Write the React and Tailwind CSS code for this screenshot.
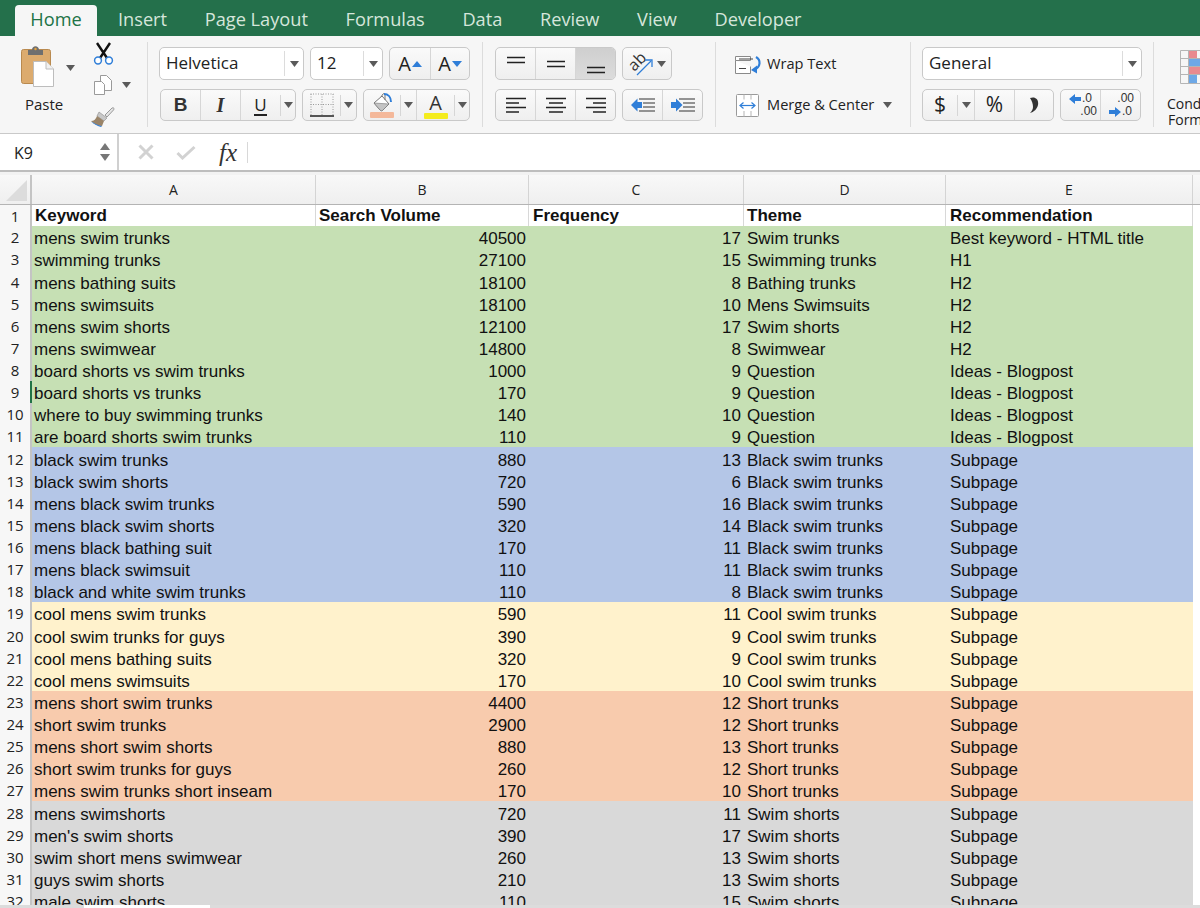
const tabs = ["Insert", "Page Layout", "Formulas", "Data", "Review", "View", "Developer"];

const green = "bg-[#c6e0b4]";
const blue = "bg-[#b4c6e7]";
const yellow = "bg-[#fff2cc]";
const orange = "bg-[#f8cbad]";
const gray = "bg-[#d9d9d9]";

const rows = [
  ["mens swim trunks", 40500, 17, "Swim trunks", "Best keyword - HTML title", green],
  ["swimming trunks", 27100, 15, "Swimming trunks", "H1", green],
  ["mens bathing suits", 18100, 8, "Bathing trunks", "H2", green],
  ["mens swimsuits", 18100, 10, "Mens Swimsuits", "H2", green],
  ["mens swim shorts", 12100, 17, "Swim shorts", "H2", green],
  ["mens swimwear", 14800, 8, "Swimwear", "H2", green],
  ["board shorts vs swim trunks", 1000, 9, "Question", "Ideas - Blogpost", green],
  ["board shorts vs trunks", 170, 9, "Question", "Ideas - Blogpost", green],
  ["where to buy swimming trunks", 140, 10, "Question", "Ideas - Blogpost", green],
  ["are board shorts swim trunks", 110, 9, "Question", "Ideas - Blogpost", green],
  ["black swim trunks", 880, 13, "Black swim trunks", "Subpage", blue],
  ["black swim shorts", 720, 6, "Black swim trunks", "Subpage", blue],
  ["mens black swim trunks", 590, 16, "Black swim trunks", "Subpage", blue],
  ["mens black swim shorts", 320, 14, "Black swim trunks", "Subpage", blue],
  ["mens black bathing suit", 170, 11, "Black swim trunks", "Subpage", blue],
  ["mens black swimsuit", 110, 11, "Black swim trunks", "Subpage", blue],
  ["black and white swim trunks", 110, 8, "Black swim trunks", "Subpage", blue],
  ["cool mens swim trunks", 590, 11, "Cool swim trunks", "Subpage", yellow],
  ["cool swim trunks for guys", 390, 9, "Cool swim trunks", "Subpage", yellow],
  ["cool mens bathing suits", 320, 9, "Cool swim trunks", "Subpage", yellow],
  ["cool mens swimsuits", 170, 10, "Cool swim trunks", "Subpage", yellow],
  ["mens short swim trunks", 4400, 12, "Short trunks", "Subpage", orange],
  ["short swim trunks", 2900, 12, "Short trunks", "Subpage", orange],
  ["mens short swim shorts", 880, 13, "Short trunks", "Subpage", orange],
  ["short swim trunks for guys", 260, 12, "Short trunks", "Subpage", orange],
  ["mens swim trunks short inseam", 170, 10, "Short trunks", "Subpage", orange],
  ["mens swimshorts", 720, 11, "Swim shorts", "Subpage", gray],
  ["men's swim shorts", 390, 17, "Swim shorts", "Subpage", gray],
  ["swim short mens swimwear", 260, 13, "Swim shorts", "Subpage", gray],
  ["guys swim shorts", 210, 13, "Swim shorts", "Subpage", gray],
  ["male swim shorts", 110, 15, "Swim shorts", "Subpage", gray],
];

function Caret({ className = "" }) {
  return (
    <svg width="9" height="6" viewBox="0 0 9 6" className={className}>
      <path d="M0 0h9L4.5 6z" fill="#5a5a5a" />
    </svg>
  );
}

function Group({ className = "", children }) {
  return (
    <div className={`flex overflow-hidden rounded-[5px] border border-[#c9c9c9] bg-linear-to-b from-[#fafafa] to-[#efefef] ${className}`}>
      {children}
    </div>
  );
}

function Cell({ className = "", children }) {
  return (
    <div className={`flex h-full items-center justify-center border-r border-[#d6d6d6] last:border-r-0 ${className}`}>
      {children}
    </div>
  );
}

// dropdown part of a button, its divider is shorter than the button
function Drop({ className = "flex-1" }) {
  return (
    <div className={`flex h-full items-center border-r border-[#d6d6d6] last:border-r-0 ${className}`}>
      <div className="flex h-[21px] w-full items-center justify-center border-l border-[#d6d6d6]">
        <Caret />
      </div>
    </div>
  );
}

function Select({ className = "", label }) {
  return (
    <div className={`flex h-[33px] items-center rounded-[5px] border border-[#c9c9c9] bg-white ${className}`}>
      <span className="-mt-[2px] flex-1 pl-[6px] text-[17px] leading-none text-[#222]">{label}</span>
      <div className="flex h-[25px] w-[19px] items-center justify-center border-l border-[#dcdcdc]">
        <Caret />
      </div>
    </div>
  );
}

// horizontal strokes used by the alignment buttons
function Lines({ lines, width = 24, height = 20 }) {
  return (
    <svg width={width} height={height} viewBox={`0 0 ${width} ${height}`}>
      {lines.map(([x1, y, x2], i) => (
        <path key={i} d={`M${x1} ${y + 0.5}H${x2}`} stroke="#222" strokeWidth="1.4" />
      ))}
    </svg>
  );
}

function PasteIcon() {
  return (
    <svg width="36" height="44" viewBox="0 0 36 44">
      <rect x="1.5" y="5.5" width="29" height="34" rx="2" fill="#dcab6e" stroke="#b98a4f" />
      <path d="M8 11V6h4c0-5 7-5 7 0h4v5z" fill="#6f6f6f" />
      <circle cx="15.5" cy="5" r="1.2" fill="#e8a33c" />
      <path d="M13.5 17.5H26l7.5 7.5v17.5h-20z" fill="#fff" stroke="#bdbdbd" />
      <path d="M26 17.5V25h7.5" fill="#f1f1f1" stroke="#bdbdbd" />
    </svg>
  );
}

function ScissorsIcon() {
  return (
    <svg width="21" height="23" viewBox="0 0 21 23">
      <path d="M4 1l10 15M17 1L7 16" stroke="#111" strokeWidth="2.4" />
      <circle cx="5" cy="18.5" r="3.4" fill="#fff" stroke="#2f7ed8" strokeWidth="1.5" />
      <circle cx="16" cy="18.5" r="3.4" fill="#fff" stroke="#2f7ed8" strokeWidth="1.5" />
    </svg>
  );
}

function CopyIcon() {
  return (
    <svg width="20" height="22" viewBox="0 0 20 22">
      <path d="M7.5 1.5h6l5 5v10h-11z" fill="#fff" stroke="#9a9a9a" />
      <path d="M1.5 7.5h7l3 3v10h-10z" fill="#fff" stroke="#9a9a9a" />
    </svg>
  );
}

function BrushIcon() {
  return (
    <svg width="24" height="21" viewBox="0 0 24 21">
      <path d="M14 9l7-7c2-1 2.500 1 1.500 2l-6.500 7z" fill="#e4e4e4" stroke="#9a9a9a" />
      <path d="M8 6l8 6-3 3-7-5z" fill="#c8c8c8" stroke="#8a8a8a" strokeWidth=".6" />
      <path d="M6 10l7 5-2 5C7 20 3 18 0 15c3 0 5-2 6-5z" fill="#9a8468" />
      <path d="M2 16.500c3 2 6 3 9 3.500l-1 1c-3-1-7-2.500-10-5.500z" fill="#2f7ed8" />
    </svg>
  );
}

function BordersIcon() {
  return (
    <svg width="24" height="24" viewBox="0 0 24 24">
      <path d="M.5 1h23M.5 11.500h23M1 1v21M12 1v21M23 1v21" stroke="#9a9a9a" strokeDasharray="1 1.500" fill="none" />
      <path d="M0 23h24" stroke="#222" strokeWidth="1.300" />
    </svg>
  );
}

function FillIcon() {
  return (
    <svg width="26" height="27" viewBox="0 0 26 27">
      <path d="M5 11l8-7 7 8-6 6c-1 1-2 1-3 0z" fill="#fff" stroke="#777" />
      <path d="M12 5l2-3c1-1 2 0 2 1v5" fill="none" stroke="#777" />
      <path d="M5 11l15 1-6 6c-1 1-2 1-3 0z" fill="#c4c4c4" stroke="#777" strokeWidth=".6" />
      <path d="M15 2c4 0 7 3 7 8" fill="none" stroke="#2f7ed8" strokeWidth="2" />
      <rect x="1" y="20" width="24" height="6" rx="1" fill="#f4b89a" />
    </svg>
  );
}

function RotateIcon() {
  return (
    <svg width="26" height="24" viewBox="0 0 26 24" className="overflow-visible">
      <text x="0" y="15" fontSize="16" fill="#333" fontFamily="Open Sans, sans-serif" transform="rotate(-45 9 10)">ab</text>
      <path d="M9 23L23 9" stroke="#2f7ed8" strokeWidth="1.300" />
      <path d="M17 8h7v7" fill="none" stroke="#2f7ed8" strokeWidth="1.300" />
    </svg>
  );
}

function IndentIcon({ flip }) {
  return (
    <svg width="24" height="16" viewBox="0 0 24 16">
      <path
        d={flip ? "M0 5h5V1.500L11.500 8 5 14.500V11H0z" : "M0 8l6.500-6.500V5H11v6H6.500v3.500z"}
        fill="#2f7ed8"
      />
      <path d="M8 2h16M12 6h12M12 10h12M8 14h16" stroke="#333" strokeWidth="1.200" />
    </svg>
  );
}

function WrapIcon() {
  return (
    <svg width="28" height="21" viewBox="0 0 28 21">
      <path d="M1.500 2.500h15v4h-15zM1.500 6.500v13h15v-7" fill="#fff" stroke="#8a8a8a" />
      <path d="M5 5h14M5 14.500h7" stroke="#444" strokeWidth="1.100" />
      <path d="M22 3c5 3 5 10-2 13" fill="none" stroke="#2f7ed8" strokeWidth="2.200" />
      <path d="M23 11.500v8l-6-3.500z" fill="#2f7ed8" />
    </svg>
  );
}

function MergeIcon() {
  return (
    <svg width="23" height="23" viewBox="0 0 23 23">
      <rect x=".5" y=".5" width="22" height="22" rx="1" fill="#fff" stroke="#9a9a9a" />
      <path d="M8 .5v5M15 .5v5M8 17v5.500M15 17v5.500" stroke="#b5b5b5" />
      <path d="M5 11.500h13" stroke="#2f7ed8" strokeWidth="1.200" />
      <path d="M7.500 8.500l-3.500 3 3.500 3M15.500 8.500l3.500 3-3.500 3" fill="none" stroke="#2f7ed8" strokeWidth="1.200" />
    </svg>
  );
}

function CommaIcon() {
  return (
    <svg width="10" height="16" viewBox="0 0 10 16">
      <path d="M1 1c5-2 9 1 8 7-1 4-4 7-8 8 2-2 3-4 3-6C4 7 3 4 1 1z" fill="#333" />
    </svg>
  );
}

function DecimalArrow({ right }) {
  return (
    <svg width="12" height="10" viewBox="0 0 12 10">
      <path d={right ? "M0 3h6V0l6 5-6 5V7H0z" : "M12 3H6V0L0 5l6 5V7h6z"} fill="#2f7ed8" />
    </svg>
  );
}

function CondIcon() {
  return (
    <svg width="24" height="34" viewBox="0 0 24 34" className="shrink-0">
      <path d="M.5.500h24M.5 8.500h24M.5 16.500h24M.5 24.500h24M.5 33.500h24M.5.500v33M8.500.500v33" stroke="#b5b5b5" fill="none" />
      <rect x="9" y="1" width="8" height="7" fill="#e98a8f" />
      <rect x="9" y="9" width="15" height="7" fill="#6ea8e6" />
      <rect x="9" y="17" width="15" height="7" fill="#e98a8f" />
      <rect x="9" y="25" width="8" height="8" fill="#6ea8e6" />
    </svg>
  );
}

function Ribbon() {
  const section = "mt-[6px] h-[85px] shrink-0 border-r border-[#dcdcdc]";
  return (
    <div className="flex h-[98px] shrink-0 border-b border-[#c9c9c9] bg-[#f6f6f6] text-[#222]">
      {/* clipboard */}
      <div className={`${section} flex w-[148px]`}>
        <div className="flex w-[87px] flex-col pl-[20px] pt-[2px]">
          <div className="flex items-center gap-[10px]">
            <PasteIcon />
            <Caret className="mt-[4px]" />
          </div>
          <span className="mt-[7px] pl-[5px] text-[15px] leading-[18px]">Paste</span>
        </div>
        <div className="flex flex-col pl-[6px]">
          <ScissorsIcon />
          <div className="mt-[9px] flex items-center gap-[9px]">
            <CopyIcon />
            <Caret />
          </div>
          <div className="mt-[10px] -ml-[2px]">
            <BrushIcon />
          </div>
        </div>
      </div>

      {/* font */}
      <div className={`${section} flex w-[335px] flex-col gap-[9px] pl-[11px] pt-[5px]`}>
        <div className="flex gap-[6px]">
          <Select className="w-[145px]" label="Helvetica" />
          <Select className="w-[73px]" label="12" />
          <Group className="h-[33px] w-[81px]">
            <Cell className="w-[41px] gap-[1px] text-[20px]">
              A
              <svg width="10" height="6" viewBox="0 0 10 6"><path d="M0 6h10L5 0z" fill="#2f7ed8" /></svg>
            </Cell>
            <Cell className="flex-1 gap-[1px] text-[20px]">
              A
              <svg width="10" height="6" viewBox="0 0 10 6"><path d="M0 0h10L5 6z" fill="#2f7ed8" /></svg>
            </Cell>
          </Group>
        </div>
        <div className="flex gap-[6px] pl-[1px]">
          <Group className="h-[32px] w-[136px]">
            <Cell className="w-[40px] font-['Liberation_Sans'] text-[19px] font-bold text-[#333]">B</Cell>
            <Cell className="w-[40px] font-['Liberation_Serif'] text-[20px] font-bold italic text-[#333]">I</Cell>
            <Cell className="w-[39px] border-r-0">
              <span className="border-b-2 border-[#222] text-[17px] leading-[19px]">U</span>
            </Cell>
            <Drop />
          </Group>
          <Group className="h-[32px] w-[55px]">
            <Cell className="w-[37px] border-r-0"><BordersIcon /></Cell>
            <Drop />
          </Group>
          <Group className="h-[32px] w-[107px]">
            <Cell className="w-[36px] border-r-0"><FillIcon /></Cell>
            <Drop className="w-[17px]" />
            <Cell className="w-[37px] flex-col border-r-0">
              <span className="text-[20px] leading-[21px] text-[#333]">A</span>
              <span className="h-[6px] w-[24px] rounded-[1px] bg-[#f4ec1e]" />
            </Cell>
            <Drop />
          </Group>
        </div>
      </div>

      {/* alignment */}
      <div className={`${section} flex w-[233px] flex-col gap-[9px] pl-[12px] pt-[5px]`}>
        <div className="flex gap-[6px]">
          <Group className="h-[33px] w-[121px]">
            <Cell className="w-[40px]"><Lines lines={[[3, 3, 21], [3, 8, 21]]} /></Cell>
            <Cell className="w-[40px]"><Lines lines={[[3, 7, 21], [3, 12, 21]]} /></Cell>
            <Cell className="flex-1 bg-linear-to-b from-[#cfcfcf] to-[#dcdcdc]"><Lines lines={[[3, 13, 21], [3, 18, 21]]} /></Cell>
          </Group>
          <Group className="h-[33px] w-[50px]">
            <Cell className="w-full gap-[3px] border-r-0"><RotateIcon /><Caret /></Cell>
          </Group>
        </div>
        <div className="flex gap-[6px]">
          <Group className="h-[32px] w-[121px]">
            <Cell className="w-[40px]"><Lines lines={[[2, 3, 22], [2, 7.500, 15], [2, 12, 22], [2, 16.500, 15]]} /></Cell>
            <Cell className="w-[40px]"><Lines lines={[[2, 3, 22], [5, 7.500, 19], [2, 12, 22], [5, 16.500, 19]]} /></Cell>
            <Cell className="flex-1"><Lines lines={[[2, 3, 22], [9, 7.500, 22], [2, 12, 22], [9, 16.500, 22]]} /></Cell>
          </Group>
          <Group className="h-[32px] w-[81px]">
            <Cell className="w-[40px]"><IndentIcon /></Cell>
            <Cell className="flex-1"><IndentIcon flip /></Cell>
          </Group>
        </div>
      </div>

      {/* wrap and merge */}
      <div className={`${section} flex w-[195px] flex-col pl-[18px] pt-[6px] text-[14.6px]`}>
        <div className="flex h-[32px] items-center gap-[5px]">
          <WrapIcon />
          <span>Wrap Text</span>
        </div>
        <div className="mt-[9px] flex h-[32px] items-center pl-[2px]">
          <MergeIcon />
          <span className="ml-[8px]">Merge &amp; Center</span>
          <Caret className="ml-[9px]" />
        </div>
      </div>

      {/* number */}
      <div className={`${section} flex w-[243px] flex-col gap-[9px] pl-[11px] pt-[5px]`}>
        <Select className="w-[220px]" label="General" />
        <div className="flex gap-[6px]">
          <Group className="h-[32px] w-[132px]">
            <Cell className="w-[34px] border-r-0 text-[21px]">$</Cell>
            <Drop className="w-[18px]" />
            <Cell className="w-[40px] text-[21px]">%</Cell>
            <Cell className="flex-1"><CommaIcon /></Cell>
          </Group>
          <Group className="h-[32px] w-[81px]">
            <Cell className="w-[40px] flex-col font-['Liberation_Sans'] text-[12px] leading-[13px] text-[#333]">
              <div className="flex items-center gap-[1px]"><DecimalArrow /><span>.0</span></div>
              <span className="self-end pr-[3px]">.00</span>
            </Cell>
            <Cell className="flex-1 flex-col font-['Liberation_Sans'] text-[12px] leading-[13px] text-[#333]">
              <span className="self-end pr-[6px]">.00</span>
              <div className="flex items-center gap-[1px]"><DecimalArrow right /><span>.0</span></div>
            </Cell>
          </Group>
        </div>
      </div>

      {/* conditional formatting */}
      <div className="mt-[14px] flex flex-col pl-[13px]">
        <div className="pl-[13px]"><CondIcon /></div>
        <span className="mt-[12px] text-[14px] leading-[16px]">Cond</span>
        <span className="pl-[1px] text-[14px] leading-[16px]">Form</span>
      </div>
    </div>
  );
}

function FormulaBar() {
  return (
    <div className="flex h-[36px] shrink-0 items-center bg-white">
      <div className="flex h-full w-[119px] items-center border-r-2 border-[#d0d0d0] pl-[14px] pr-[7px] text-[16px] text-[#222]">
        <span className="mt-[2px] flex-1">K9</span>
        <div className="flex flex-col gap-[4px]">
          <svg width="10" height="7" viewBox="0 0 10 7"><path d="M0 7h10L5 0z" fill="#777" /></svg>
          <svg width="10" height="7" viewBox="0 0 10 7"><path d="M0 0h10L5 7z" fill="#777" /></svg>
        </div>
      </div>
      <svg width="16" height="16" viewBox="0 0 16 16" className="ml-[19px]">
        <path d="M1.500 1.500l13 13M14.500 1.500l-13 13" stroke="#d2d2d2" strokeWidth="3" />
      </svg>
      <svg width="20" height="15" viewBox="0 0 20 15" className="ml-[22px]">
        <path d="M1.500 8l5 5L18.500 2" fill="none" stroke="#d2d2d2" strokeWidth="3" />
      </svg>
      <span className="ml-[23px] font-['Liberation_Serif'] text-[25px] italic leading-none text-[#333]">fx</span>
      <span className="ml-[10px] h-[21px] w-px bg-[#d8d8d8]" />
    </div>
  );
}

const colWidths = ["w-[284px]", "w-[213px]", "w-[215px]", "w-[202px]", "w-[247px]"];
const headPad = ["pl-[3px]", "pl-[3px]", "pl-[4px]", "pl-[3px]", "pl-[4px]"];

function ColumnHeader() {
  return (
    <div className="flex h-[30px] shrink-0 border-b border-[#b4b4b4] bg-linear-to-b from-[#f8f8f8] to-[#efefef]">
      <div className="flex w-[32px] shrink-0 items-end justify-end border-r-2 border-[#c4c4c4] pb-[3px] pr-[3px]">
        <svg width="21" height="21" viewBox="0 0 21 21"><path d="M21 0v21H0z" fill="#dcdcdc" /></svg>
      </div>
      {["A", "B", "C", "D", "E"].map((c, i) => (
        <div key={c} className={`flex items-center justify-center border-r border-[#d4d4d4] text-[14px] text-[#222] ${colWidths[i]}`}>
          {c}
        </div>
      ))}
    </div>
  );
}

function RowNumber({ n, height }) {
  return (
    <div className={`flex w-[32px] shrink-0 items-center justify-center border-r-2 bg-[#f7f7f7] pt-[1px] text-[15px] text-[#222] ${n === 9 ? "border-[#217346]" : "border-[#c4c4c4]"} ${height}`}>
      {n}
    </div>
  );
}

function Sheet() {
  return (
    <div className="min-h-0 flex-1 overflow-hidden font-['Liberation_Sans',sans-serif] text-[17px] text-[#111]">
      <div className="flex">
        <div className="font-['Open_Sans',sans-serif]"><RowNumber n={1} height="h-[21px]" /></div>
        <div className="flex h-[21px] items-center font-bold">
          {["Keyword", "Search Volume", "Frequency", "Theme", "Recommendation"].map((h, i) => (
            <div key={h} className={`flex h-full items-center border-r border-[#d8d8d8] ${headPad[i]} ${colWidths[i]}`}>{h}</div>
          ))}
        </div>
      </div>
      {rows.map((r, i) => (
        <div key={r[0]} className="flex">
          <div className="font-['Open_Sans',sans-serif]"><RowNumber n={i + 2} height="h-[22.13px]" /></div>
          <div className={`flex h-[22.13px] items-center pt-[4px] ${r[5]}`}>
            <div className={`whitespace-nowrap pl-[2px] ${colWidths[0]}`}>{r[0]}</div>
            <div className={`pr-[3px] text-right ${colWidths[1]}`}>{r[1]}</div>
            <div className={`pr-[3px] text-right ${colWidths[2]}`}>{r[2]}</div>
            <div className={`pl-[3px] ${colWidths[3]}`}>{r[3]}</div>
            <div className={`pl-[4px] ${colWidths[4]}`}>{r[4]}</div>
          </div>
        </div>
      ))}
    </div>
  );
}

export default function App() {
  return (
    <div className="flex h-[908px] w-[1200px] flex-col overflow-hidden bg-white font-['Open_Sans',sans-serif]">
      {/* Tabs */}
      <div className="flex h-[36px] shrink-0 items-end bg-[#24704b] pl-[15px] text-[18.2px]">
        <div className="flex h-[31px] w-[82px] items-center justify-center rounded-t-[4px] bg-[#f6f6f6] pb-[2px] font-medium text-[#217346]">
          Home
        </div>
        <div className="flex h-[31px] gap-[37.7px] pb-[2px] pl-[21px] text-[#d6e6db]">
          {tabs.map((t) => (
            <span key={t} className="flex items-center">{t}</span>
          ))}
        </div>
      </div>

      <Ribbon />
      <FormulaBar />

      <div className="h-[5px] shrink-0 border-t-2 border-[#bdbdbd] bg-[#f2f2f2]" />
      <ColumnHeader />
      <Sheet />

      {/* sheet tab strip, only its top edge is in view */}
      <div className="flex h-[3px] shrink-0 bg-[#dcdcdc]">
        <div className="ml-[84px] w-[126px] bg-white" />
      </div>
    </div>
  );
}
